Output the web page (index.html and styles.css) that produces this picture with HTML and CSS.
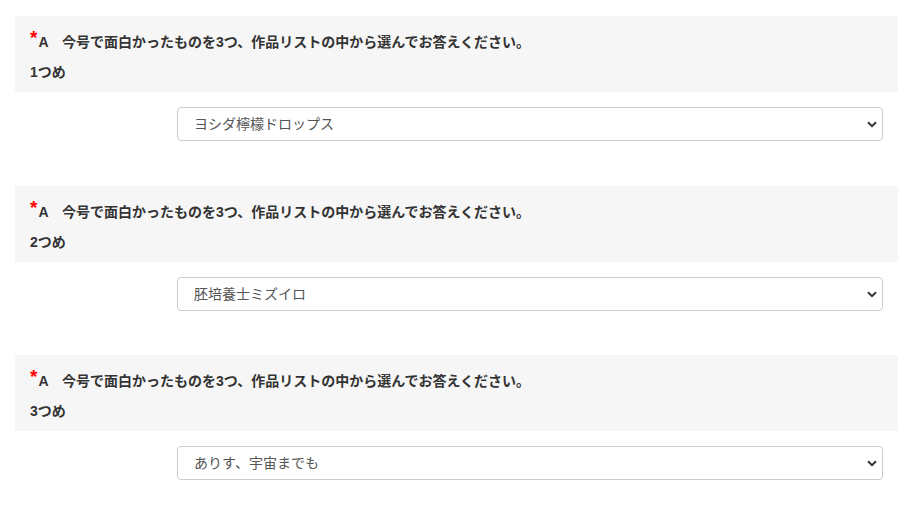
FILE: index.html
```html
<!DOCTYPE html>
<html lang="ja">
<head>
<meta charset="utf-8">
<link rel="stylesheet" href="styles.css">
</head>
<body>
<div class="page">
  <section class="block">
    <div class="q">
      <div class="q-title"><span class="req">*</span>A　今号で面白かったものを3つ、作品リストの中から選んでお答えください。</div>
      <div class="q-sub">1つめ</div>
    </div>
    <div class="answer">
      <div class="select-wrap">
        <select class="sel"><option>ヨシダ檸檬ドロップス</option></select>
        <svg class="chev" width="10" height="7" viewBox="0 0 10 7"><path d="M1 1.2 L5 5.2 L9 1.2" fill="none" stroke="#333" stroke-width="2"/></svg>
      </div>
    </div>
  </section>
  <section class="block">
    <div class="q">
      <div class="q-title"><span class="req">*</span>A　今号で面白かったものを3つ、作品リストの中から選んでお答えください。</div>
      <div class="q-sub">2つめ</div>
    </div>
    <div class="answer">
      <div class="select-wrap">
        <select class="sel"><option>胚培養士ミズイロ</option></select>
        <svg class="chev" width="10" height="7" viewBox="0 0 10 7"><path d="M1 1.2 L5 5.2 L9 1.2" fill="none" stroke="#333" stroke-width="2"/></svg>
      </div>
    </div>
  </section>
  <section class="block">
    <div class="q">
      <div class="q-title"><span class="req">*</span>A　今号で面白かったものを3つ、作品リストの中から選んでお答えください。</div>
      <div class="q-sub">3つめ</div>
    </div>
    <div class="answer">
      <div class="select-wrap">
        <select class="sel"><option>ありす、宇宙までも</option></select>
        <svg class="chev" width="10" height="7" viewBox="0 0 10 7"><path d="M1 1.2 L5 5.2 L9 1.2" fill="none" stroke="#333" stroke-width="2"/></svg>
      </div>
    </div>
  </section>
</div>
</body>
</html>
```
FILE: styles.css
```css
html, body {
  margin: 0;
  padding: 0;
  background: #fff;
}
body {
  font-family: "Liberation Sans", "Noto Sans CJK JP", sans-serif;
  color: #333;
}
.page {
  width: 883px;
  padding: 16px 0 0 15px;
}
.block {
  margin-bottom: 44.5px;
}
.q {
  background: #f6f6f6;
  height: 76px;
  box-sizing: border-box;
  padding: 13px 15px 0 15px;
  font-weight: bold;
  font-size: 14px;
}
.q-title {
  line-height: 24px;
  height: 24px;
  white-space: nowrap;
}
.req {
  color: #f00;
  font-size: 19px;
  position: relative;
  top: -3px;
  margin-right: 1px;
}
.q-sub {
  line-height: 24px;
  margin-top: 7px;
}
.answer {
  padding: 15px 15px 0 162px;
}
.select-wrap {
  position: relative;
  height: 34px;
}
.sel {
  -webkit-appearance: none;
  appearance: none;
  width: 100%;
  height: 34px;
  box-sizing: border-box;
  border: 1px solid #ccc;
  border-radius: 4px;
  background: #fff;
  padding: 0 30px 0 16px;
  font-family: "Liberation Sans", "Noto Sans CJK JP", sans-serif;
  font-size: 14px;
  color: #555;
  outline: none;
}
.chev {
  position: absolute;
  right: 6px;
  top: 14px;
  pointer-events: none;
}
```
